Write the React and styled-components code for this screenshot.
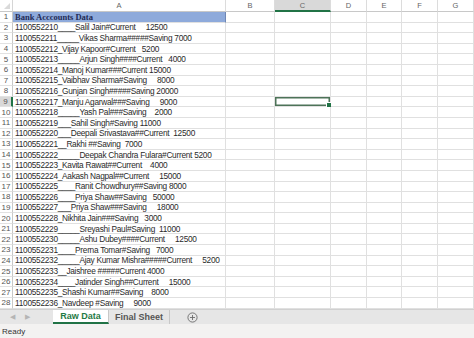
import React from "react";
import styled, { createGlobalStyle } from "styled-components";

const GlobalStyle = createGlobalStyle`
  html, body {
    margin: 0;
    padding: 0;
    background: #ffffff;
  }
  body {
    font-family: "Liberation Sans", Arial, sans-serif;
  }
`;

const Window = styled.div`
  width: 474px;
  height: 338px;
  display: flex;
  flex-direction: column;
  overflow: hidden;
  background: #fff;
`;

const Sheet = styled.div`
  display: grid;
  grid-template-columns: 13px 213px 49px 56px 36px 35px 36px 1fr;
  grid-template-rows: 12px repeat(28, 10.6px);
  height: 309px;
  overflow: hidden;
`;

const Corner = styled.div`
  position: relative;
  background: #fff;
  border-right: 1px solid #d6d6d6;
  border-bottom: 1px solid #c8c8c8;
  &::after {
    content: "";
    position: absolute;
    right: 2px;
    bottom: 2px;
    border-left: 6px solid transparent;
    border-bottom: 6px solid #dadada;
  }
`;

const ColHead = styled.div`
  display: flex;
  align-items: center;
  justify-content: center;
  font-size: 7.5px;
  color: #666;
  background: ${(p) => (p.$active ? "#d9d9d9" : "#fff")};
  border-right: 1px solid #dcdcdc;
  border-bottom: ${(p) => (p.$active ? "2px solid #217346" : "1px solid #c8c8c8")};
  box-sizing: border-box;
`;

const RowHead = styled.div`
  display: flex;
  align-items: center;
  justify-content: center;
  font-size: 8px;
  color: #555;
  background: ${(p) => (p.$active ? "#d9d9d9" : "#fff")};
  border-right: ${(p) => (p.$active ? "2px solid #217346" : "1px solid #c8c8c8")};
  border-bottom: 1px solid #e2e2e2;
  box-sizing: border-box;
`;

const Cell = styled.div`
  position: relative;
  display: flex;
  align-items: center;
  padding-left: 2px;
  white-space: pre;
  overflow: visible;
  font-size: 8.3px;
  letter-spacing: -0.28px;
  color: #2a2a2a;
  background: ${(p) => (p.$title ? "#8eaadb" : "transparent")};
  border-right: 1px solid ${(p) => (p.$title ? "#6f87b3" : "#e0e0e0")};
  border-bottom: 1px solid #e0e0e0;
  box-sizing: border-box;
  box-shadow: ${(p) => (p.$selected ? "inset 0 0 0 1.5px #4d7358" : "none")};
  z-index: ${(p) => (p.$text ? 1 : 0)};
`;

const Title = styled.span`
  font-family: "Liberation Serif", "Times New Roman", serif;
  font-weight: bold;
  font-size: 8.5px;
  letter-spacing: 0;
  color: #1f2b55;
`;

const Handle = styled.span`
  position: absolute;
  right: -2px;
  bottom: -2px;
  width: 4px;
  height: 4px;
  background: #217346;
  border: 1px solid #fff;
  z-index: 2;
`;

const TabBar = styled.div`
  height: 15px;
  display: flex;
  align-items: stretch;
  background: #e6e6e6;
  border-top: 1px solid #d0d0d0;
  box-sizing: border-box;
`;

const NavArrows = styled.div`
  width: 53px;
  display: flex;
  align-items: center;
  gap: 10px;
  padding-left: 10px;
  box-sizing: border-box;
  color: #b5b5b5;
  font-size: 7px;
`;

const Tab = styled.div`
  display: flex;
  align-items: center;
  justify-content: center;
  width: ${(p) => p.$w}px;
  font-size: 9px;
  font-weight: bold;
  color: ${(p) => (p.$active ? "#1f7a45" : "#555")};
  background: ${(p) => (p.$active ? "#fff" : "transparent")};
  border-bottom: ${(p) => (p.$active ? "2px solid #217346" : "none")};
  border-right: 1px solid #c8c8c8;
  box-sizing: border-box;
`;

const AddButton = styled.div`
  display: flex;
  align-items: center;
  margin-left: 17px;
`;

const StatusBar = styled.div`
  flex: 1;
  display: flex;
  align-items: center;
  padding-left: 2px;
  background: #f3f2f1;
  font-size: 8px;
  color: #333;
`;

const rows = [
  "1100552210____Salil Jain#Current     12500",
  "1100552211_____Vikas Sharma#####Saving 7000",
  "1100552212_Vijay Kapoor#Current   5200",
  "1100552213_____Arjun Singh####Current   4000",
  "1100552214_Manoj Kumar###Current 15000",
  "1100552215_Vaibhav Sharma#Saving     8000",
  "1100552216_Gunjan Singh#####Saving 20000",
  "1100552217_Manju Agarwal###Saving     9000",
  "1100552218_____Yash Pal###Saving    2000",
  "1100552219___Sahil Singh#Saving 11000",
  "1100552220___Deepali Srivastava##Current  12500",
  "1100552221__Rakhi ##Saving  7000",
  "1100552222_____Deepak Chandra Fulara#Current 5200",
  "1100552223_Kavita Rawat##Current    4000",
  "1100552224_Aakash Nagpal##Current     15000",
  "1100552225____Ranit Chowdhury##Saving 8000",
  "1100552226____Priya Shaw##Saving   50000",
  "1100552227___Priya Shaw###Saving     18000",
  "1100552228_Nikhita Jain###Saving   3000",
  "1100552229_____Sreyashi Paul#Saving  11000",
  "1100552230_____Ashu Dubey####Current     12500",
  "1100552231____Prerna Tomar#Saving   7000",
  "1100552232_____Ajay Kumar Mishra#####Current     5200",
  "1100552233__Jaishree #####Current 4000",
  "1100552234____Jatinder Singh##Current     15000",
  "1100552235_Shashi Kumar##Saving    8000",
  "1100552236_Navdeep #Saving     9000",
];

const cols = ["A", "B", "C", "D", "E", "F", "G"];

const PlusIcon = () => (
  <svg width="11" height="11" viewBox="0 0 11 11">
    <circle cx="5.5" cy="5.5" r="4.6" fill="none" stroke="#6b6b6b" strokeWidth="0.9" />
    <path d="M5.5 3v5M3 5.5h5" stroke="#6b6b6b" strokeWidth="0.9" />
  </svg>
);

const App = () => {
  const lines = ["__title__", ...rows];
  return (
    <Window>
      <GlobalStyle />
      <Sheet>
        <Corner />
        {cols.map((c) => (
          <ColHead key={c} $active={c === "C"}>{c}</ColHead>
        ))}
        {lines.map((text, i) => {
          const n = i + 1;
          return (
            <React.Fragment key={n}>
              <RowHead $active={n === 9}>{n}</RowHead>
              <Cell $title={n === 1} $text>
                {n === 1 ? <Title>Bank Acccounts Data</Title> : text}
              </Cell>
              {cols.slice(1).map((c) => (
                <Cell key={c} $selected={n === 9 && c === "C"}>
                  {n === 9 && c === "C" && <Handle />}
                </Cell>
              ))}
            </React.Fragment>
          );
        })}
      </Sheet>
      <TabBar>
        <NavArrows>
          <span>◀</span>
          <span>▶</span>
        </NavArrows>
        <Tab $active $w={56}>Raw Data</Tab>
        <Tab $w={61}>Final Sheet</Tab>
        <AddButton>
          <PlusIcon />
        </AddButton>
      </TabBar>
      <StatusBar>Ready</StatusBar>
    </Window>
  );
};

export default App;
